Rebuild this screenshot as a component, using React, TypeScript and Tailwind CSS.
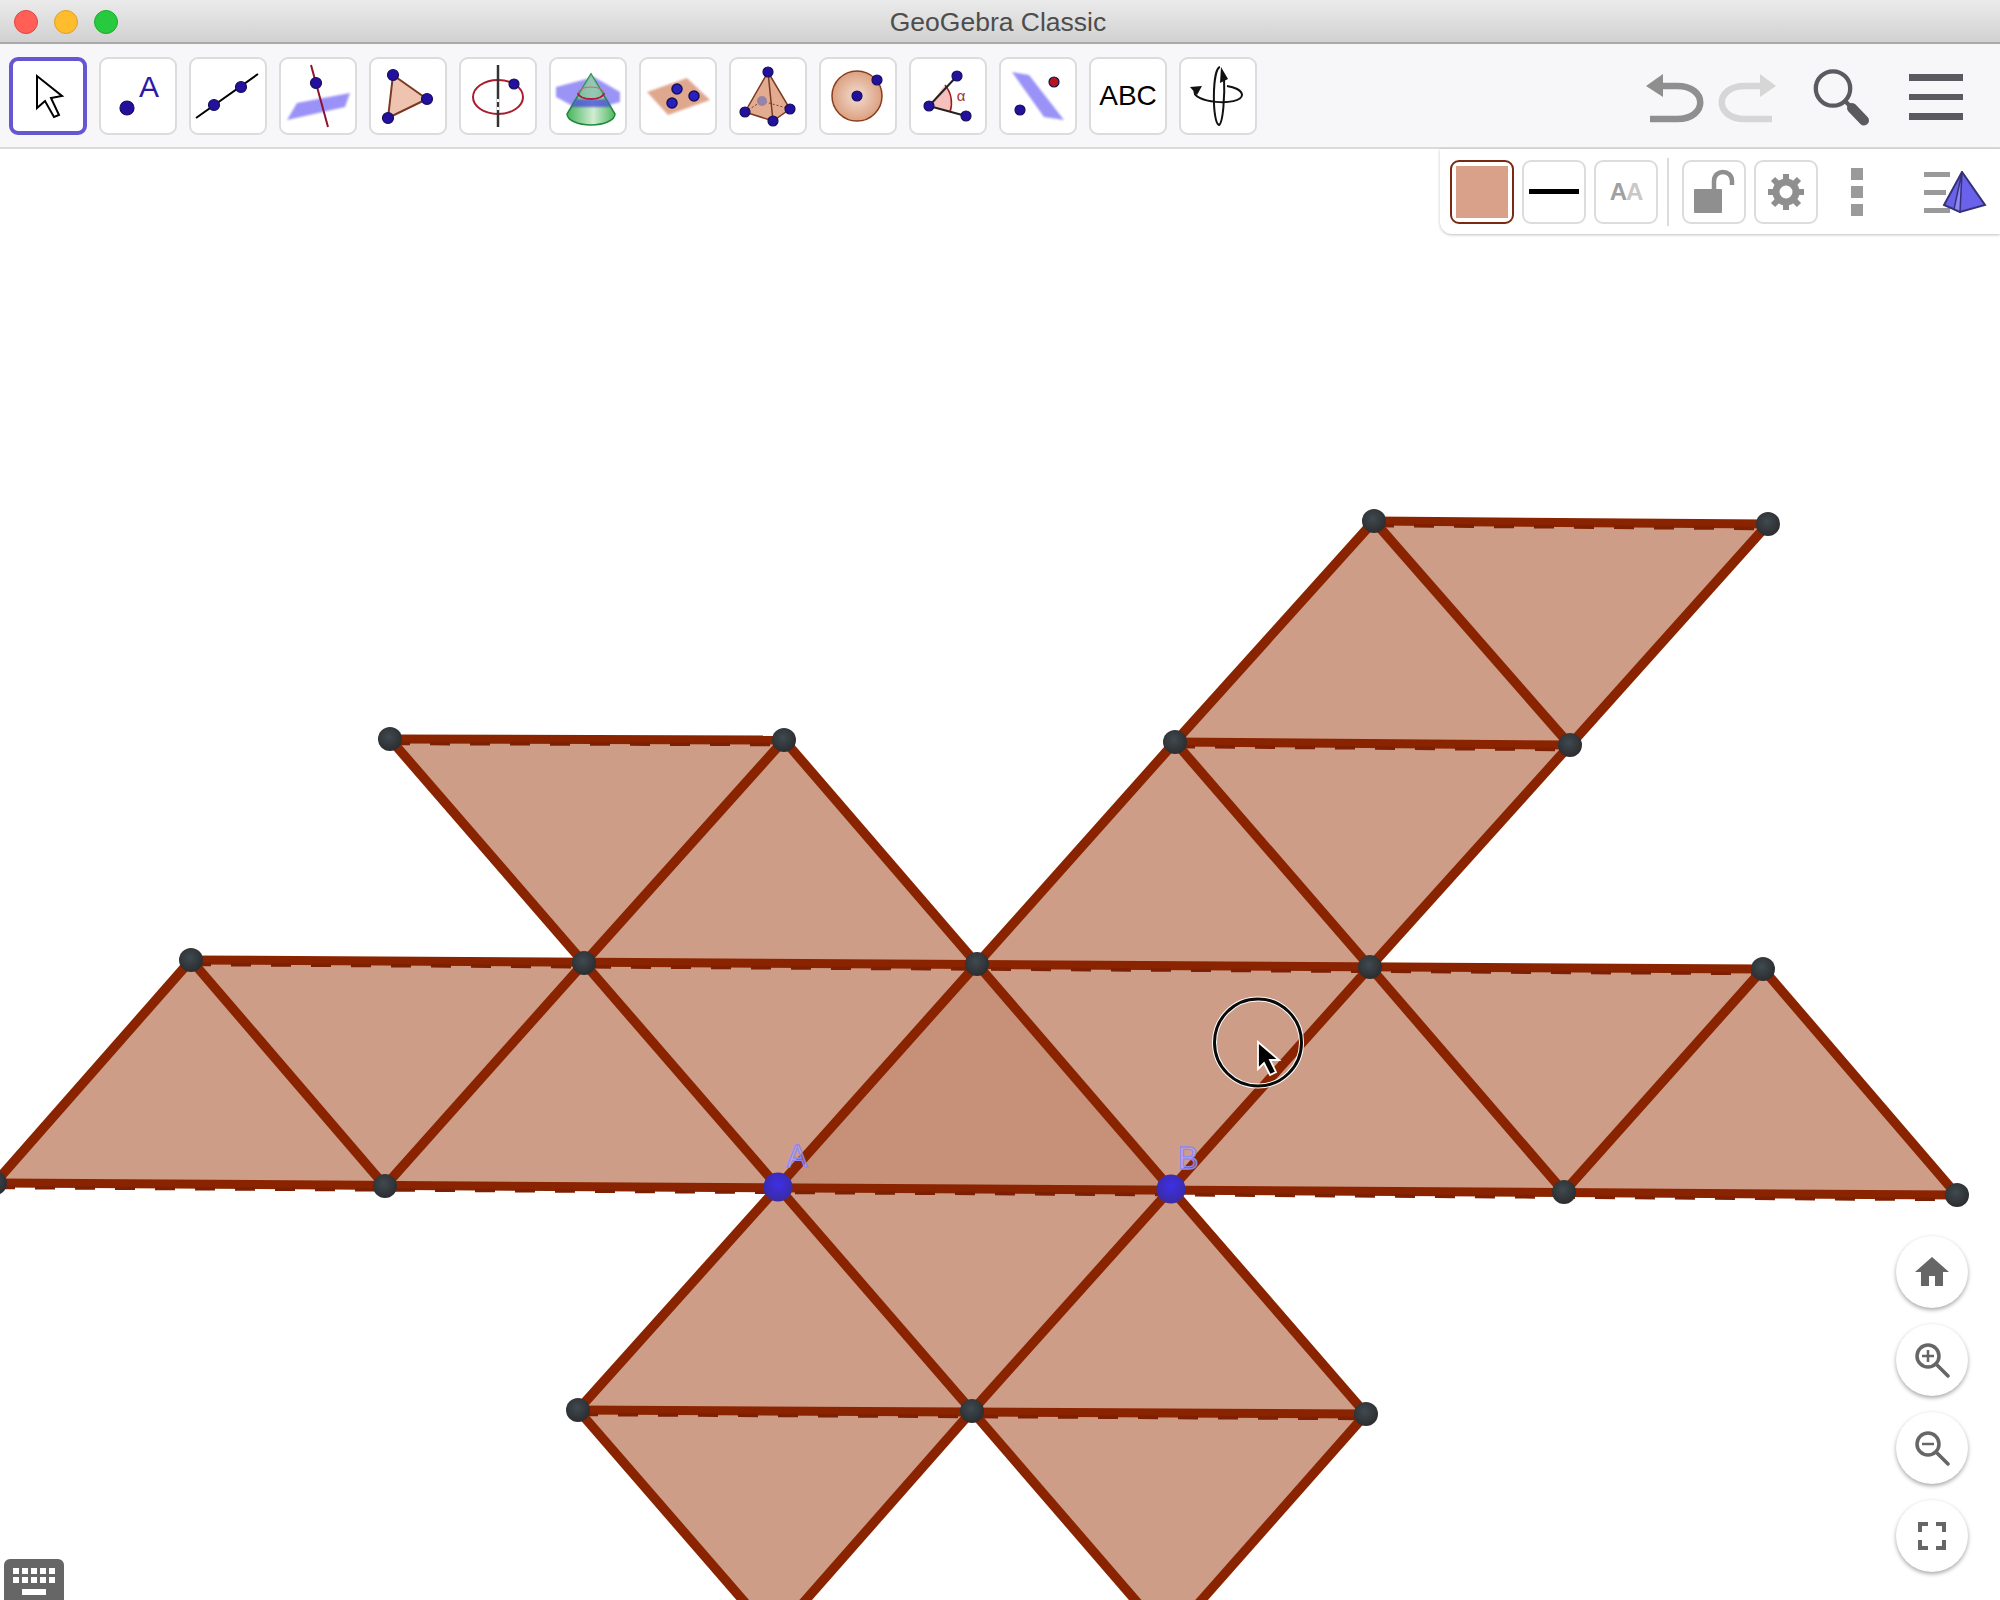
import React from "react";

type P = [number, number];
const V: Record<string, P> = {
  a: [1374, 521], b: [1768, 524], c: [1175, 742], d: [1570, 745],
  e: [390, 739], f: [784, 740],
  g: [191, 960], h: [584, 963], i: [977, 964], j: [1370, 967], k: [1763, 969],
  l: [-5, 1183], m: [385, 1186], n: [778, 1187], o: [1171, 1189], p: [1564, 1192], q: [1957, 1195],
  r: [578, 1410], s: [972, 1411], t: [1366, 1414],
  u: [774, 1636], v: [1168, 1638],
};
const TRIS = ["abd", "acd", "cdj", "cij", "efh", "fhi", "ghm", "glm", "hmn", "hin", "ino", "ijo", "jop", "jkp", "kpq", "nos", "nrs", "ost", "rsu", "stv"];
const HORIZ = ["ab", "cd", "ef", "gk", "lq", "rt"];
const DIAG = ["ad", "ac", "bd", "dj", "cj", "ci", "eh", "fh", "fi", "gm", "gl", "hm", "hn", "in", "io", "jo", "jp", "kp", "kq", "ns", "nr", "os", "ot", "ru", "su", "sv", "tv"];
const DARK = ["a", "b", "c", "d", "e", "f", "g", "h", "i", "j", "k", "l", "m", "p", "q", "r", "s", "t"];

const pts = (s: string) => s.split("").map((c) => V[c].join(",")).join(" ");

function Canvas() {
  return (
    <svg className="absolute inset-0" width="2000" height="1451" viewBox="0 149 2000 1451">
      <defs>
        <radialGradient id="gDark" cx="45%" cy="40%" r="65%">
          <stop offset="0%" stopColor="#3f4a50" />
          <stop offset="100%" stopColor="#2a2a2c" />
        </radialGradient>
        <radialGradient id="gBlue" cx="50%" cy="40%" r="65%">
          <stop offset="0%" stopColor="#3d30e6" />
          <stop offset="100%" stopColor="#3a2a9c" />
        </radialGradient>
      </defs>
      {TRIS.map((t) => (
        <polygon key={t} points={pts(t)} fill={t === "ino" ? "#c79079" : "#ce9d88"} />
      ))}
      {DIAG.map((e) => (
        <line key={e} x1={V[e[0]][0]} y1={V[e[0]][1]} x2={V[e[1]][0]} y2={V[e[1]][1]} stroke="#8a2400" strokeWidth="9.5" />
      ))}
      {HORIZ.map((e) => (
        <g key={e}>
          <line x1={V[e[0]][0]} y1={V[e[0]][1]} x2={V[e[1]][0]} y2={V[e[1]][1]} stroke="#8a2400" strokeWidth="9" />
          <line x1={V[e[0]][0]} y1={V[e[0]][1] + 4.5} x2={V[e[1]][0]} y2={V[e[1]][1] + 4.5} stroke="#7c1f02" strokeWidth="3.5" strokeDasharray="20 20" />
        </g>
      ))}
      {DARK.map((k) => (
        <circle key={k} cx={V[k][0]} cy={V[k][1]} r="12" fill="url(#gDark)" />
      ))}
      <circle cx={V.n[0]} cy={V.n[1]} r="14.5" fill="url(#gBlue)" />
      <circle cx={V.o[0]} cy={V.o[1]} r="14.5" fill="url(#gBlue)" />
      <text x="797" y="1167" textAnchor="middle" fontFamily="Liberation Sans, sans-serif" fontSize="31" fill="#c9b8f0" fillOpacity="0.35" stroke="#8c88f8" strokeWidth="1.3">A</text>
      <text x="1188" y="1169" textAnchor="middle" fontFamily="Liberation Sans, sans-serif" fontSize="31" fill="#c9b8f0" fillOpacity="0.35" stroke="#8c88f8" strokeWidth="1.3">B</text>
      <circle cx="1258" cy="1042.5" r="43.5" fill="none" stroke="#fff" strokeWidth="5" />
      <circle cx="1258" cy="1042.5" r="43.5" fill="none" stroke="#0a0a0a" strokeWidth="3" />
      <polygon points="1258,1042 1258,1069 1264,1063 1270,1075 1276,1072 1270,1060 1279,1060" fill="#000" stroke="#fff" strokeWidth="1.8" />
    </svg>
  );
}

const BP = "#23109f";
const Pt = ({ x, y, c = BP, r = 6.5 }: { x: number; y: number; c?: string; r?: number }) => (
  <circle cx={x} cy={y} r={r} fill={c} stroke="#14105a" strokeWidth="1.2" />
);

const Ico = ({ children }: { children: React.ReactNode }) => (
  <svg width="78" height="78" viewBox="0 0 78 78" className="block shrink-0">
    {children}
  </svg>
);

const ICONS: React.ReactNode[] = [
  <Ico key="0">
    <polygon points="28,19 28,51 36,44 45,60 50,58 42,41 53,39" fill="#fff" stroke="#000" strokeWidth="2" />
  </Ico>,
  <Ico key="1">
    <Pt x={28} y={51} r={7} />
    <text x="50" y="40" textAnchor="middle" fontFamily="Liberation Sans, sans-serif" fontSize="30" fill="#2a1aa8">A</text>
  </Ico>,
  <Ico key="2">
    <line x1="7" y1="61" x2="69" y2="17" stroke="#000" strokeWidth="2" />
    <Pt x={25} y={48} r={5.5} />
    <Pt x={52} y={30} r={5.5} />
  </Ico>,
  <Ico key="3">
    <polygon points="8,63 18,46 71,36 66,50" fill="#9a92f6" style={{ filter: "blur(1px)" }} />
    <line x1="32" y1="8" x2="49" y2="70" stroke="#8c1230" strokeWidth="2" />
    <Pt x={37} y={26} r={5.5} />
  </Ico>,
  <Ico key="4">
    <polygon points="24,18 58,42 19,61" fill="#eec4b0" stroke="#7a3a20" strokeWidth="2" />
    <Pt x={24} y={18} r={5.5} />
    <Pt x={58} y={42} r={5.5} />
    <Pt x={19} y={61} r={5.5} />
  </Ico>,
  <Ico key="5">
    <ellipse cx="39" cy="40" rx="25" ry="17" fill="none" stroke="#a81c2c" strokeWidth="2" />
    <line x1="39" y1="8" x2="39" y2="70" stroke="#333" strokeWidth="2.5" />
    <line x1="39" y1="42" x2="39" y2="56" stroke="#fff" strokeWidth="2.5" strokeDasharray="3 5" />
    <Pt x={55} y={27} r={5} />
  </Ico>,
  <Ico key="6">
    <defs>
      <linearGradient id="cone" x1="0" x2="1" y1="0" y2="0">
        <stop offset="0%" stopColor="#47b45c" />
        <stop offset="55%" stopColor="#d2ecd2" />
        <stop offset="100%" stopColor="#4db862" />
      </linearGradient>
    </defs>
    <polygon points="7,30 45,20 71,35 71,45 35,55 7,40" fill="#8a82f4" opacity="0.85" style={{ filter: "blur(0.8px)" }} />
    <path d="M42 17 L18 57 A24 11 0 0 0 66 57 Z" fill="url(#cone)" stroke="#1f8a3a" strokeWidth="1.5" />
    <path d="M42 17 L30 37 A13 6 0 0 0 54 37 Z" fill="#7fb8a8" opacity="0.7" />
    <polygon points="27,42 57,42 62,50 22,50" fill="#4a50d8" opacity="0.8" style={{ filter: "blur(0.8px)" }} />
    <ellipse cx="42" cy="36" rx="13" ry="6" fill="none" stroke="#c46a70" strokeWidth="1" />
    <path d="M29 36 A13 6 0 0 0 55 36" fill="none" stroke="#b01c3c" strokeWidth="1.8" />
  </Ico>,
  <Ico key="7">
    <polygon points="8,35 48,21 71,43 29,58" fill="#dfa88e" style={{ filter: "blur(1px)" }} />
    <circle cx="38" cy="32" r="5" fill="#2a20c0" stroke="#14105a" strokeWidth="1.5" />
    <circle cx="55" cy="39" r="5" fill="#2a20c0" stroke="#14105a" strokeWidth="1.5" />
    <circle cx="33" cy="46" r="5" fill="#2a20c0" stroke="#14105a" strokeWidth="1.5" />
  </Ico>,
  <Ico key="8">
    <polygon points="39,15 16,55 44,64 61,52" fill="#e3ac90" stroke="#7a3a20" strokeWidth="1.5" />
    <line x1="39" y1="15" x2="44" y2="64" stroke="#7a3a20" strokeWidth="1.5" />
    <line x1="16" y1="55" x2="33" y2="44" stroke="#7a3a20" strokeWidth="1" strokeDasharray="2 2" />
    <line x1="61" y1="52" x2="33" y2="44" stroke="#7a3a20" strokeWidth="1" strokeDasharray="2 2" />
    <Pt x={39} y={15} r={5} />
    <Pt x={16} y={55} r={5} />
    <Pt x={61} y={52} r={5} />
    <Pt x={44} y={64} r={5} />
    <circle cx="33" cy="44" r="5" fill="#9684a8" />
  </Ico>,
  <Ico key="9">
    <defs>
      <radialGradient id="ball" cx="50%" cy="50%" r="55%">
        <stop offset="0%" stopColor="#f3ddd2" />
        <stop offset="100%" stopColor="#d99b78" />
      </radialGradient>
    </defs>
    <circle cx="38" cy="39" r="25" fill="url(#ball)" stroke="#8a3c1c" strokeWidth="1.5" />
    <Pt x={38} y={39} r={5} />
    <Pt x={58} y={23} r={5} />
  </Ico>,
  <Ico key="10">
    <path d="M20 49 L36 28 A28 28 0 0 1 41 55 Z" fill="#f6c0bc" />
    <path d="M36 28 A28 28 0 0 1 41 55" fill="none" stroke="#9a1c1c" strokeWidth="1.5" />
    <line x1="20" y1="49" x2="48" y2="19" stroke="#222" strokeWidth="2" />
    <line x1="20" y1="49" x2="57" y2="59" stroke="#222" strokeWidth="2" />
    <Pt x={48} y={19} r={5} />
    <Pt x={20} y={49} r={5} />
    <Pt x={57} y={59} r={5} />
    <text x="52" y="44" textAnchor="middle" fontFamily="Liberation Sans, sans-serif" fontSize="15" fill="#a8302c">α</text>
  </Ico>,
  <Ico key="11">
    <polygon points="13,15 30,18 65,63 45,60" fill="#9a92f6" style={{ filter: "blur(1px)" }} />
    <Pt x={55} y={25} r={5} c="#b8141c" />
    <Pt x={21} y={53} r={5} />
  </Ico>,
  <span key="12" className="text-[28px] leading-none text-black [font-family:'Liberation_Sans',sans-serif]">ABC</span>,
  <Ico key="13">
    <path d="M41 10 C33 12 33 66 40 68 C44 66 46 40 45 18" fill="none" stroke="#111" strokeWidth="2" />
    <path d="M16 33 C10 46 62 50 63 38 C63 33 55 30 48 29" fill="none" stroke="#111" strokeWidth="2" />
    <polygon points="42,10 49,22 41,26" fill="#111" />
    <polygon points="11,30 23,29 18,38" fill="#111" />
  </Ico>,
];

function ToolButton({ active, children }: { active?: boolean; children: React.ReactNode }) {
  return (
    <button
      className={
        active
          ? "flex h-[78px] w-[78px] items-center justify-center rounded-[9px] border-4 border-[#6557d2] bg-white"
          : "flex h-[78px] w-[78px] items-center justify-center rounded-[9px] border-2 border-[#dcdcdc] bg-white"
      }
    >
      {children}
    </button>
  );
}

function StyleButton({ active, children }: { active?: boolean; children: React.ReactNode }) {
  return (
    <button
      className={
        active
          ? "flex h-[64px] w-[64px] items-center justify-center rounded-[9px] border-2 border-[#7a2a12] bg-white"
          : "flex h-[64px] w-[64px] items-center justify-center rounded-[9px] border-2 border-[#dcdcdc] bg-white"
      }
    >
      {children}
    </button>
  );
}

function ZoomButton({ children }: { children: React.ReactNode }) {
  return (
    <button className="flex h-[72px] w-[72px] items-center justify-center rounded-full bg-white shadow-[0_2px_4px_rgba(0,0,0,0.35)]">
      {children}
    </button>
  );
}

export default function App() {
  return (
    <div className="flex h-[1600px] w-[2000px] flex-col overflow-hidden bg-white [font-family:'Liberation_Sans',sans-serif]">
      <div className="relative flex h-[44px] shrink-0 items-center justify-center border-b-2 border-[#a9a9a9] bg-gradient-to-b from-[#ebebeb] to-[#d1d1d1]">
        <div className="absolute left-[14px] top-[10px] flex gap-[16px]">
          <span className="h-[24px] w-[24px] rounded-full border border-[#e0443e] bg-[#ff5f57]" />
          <span className="h-[24px] w-[24px] rounded-full border border-[#dea123] bg-[#ffbd2e]" />
          <span className="h-[24px] w-[24px] rounded-full border border-[#1aab29] bg-[#27c93f]" />
        </div>
        <span className="mr-[4px] mt-[2px] text-[26.5px] leading-none text-[#4d4d4d]">GeoGebra Classic</span>
      </div>

      <div className="flex h-[105px] shrink-0 items-center justify-between border-b-2 border-[#dadada] bg-[#f7f7f9] pl-[9px] pr-[37px]">
        <div className="flex gap-[12px]">
          {ICONS.map((ic, i) => (
            <ToolButton key={i} active={i === 0}>
              {ic}
            </ToolButton>
          ))}
        </div>
        <div className="mt-[5px] flex items-center">
          <svg width="60" height="56" viewBox="1644 70 60 56">
            <path d="M1650 119 H1677 C1708 119 1708 86 1677 86 H1660" fill="none" stroke="#8f8f8f" strokeWidth="6.5" />
            <polygon points="1646,86 1663,74 1663,97" fill="#8f8f8f" />
          </svg>
          <svg width="60" height="56" viewBox="1718 70 60 56" className="ml-[14px]">
            <path d="M1772 119 H1745 C1714 119 1714 86 1745 86 H1762" fill="none" stroke="#d6d6d6" strokeWidth="6.5" />
            <polygon points="1776,86 1760,74 1760,97" fill="#d6d6d6" />
          </svg>
          <svg width="60" height="58" viewBox="1812 70 60 58" className="ml-[34px]">
            <circle cx="1833" cy="89.5" r="17.2" fill="none" stroke="#5b5a60" strokeWidth="4.3" />
            <line x1="1845" y1="102" x2="1852" y2="109" stroke="#5b5a60" strokeWidth="4.3" />
            <line x1="1852" y1="109" x2="1864" y2="121.5" stroke="#5b5a60" strokeWidth="10" strokeLinecap="round" />
          </svg>
          <div className="mb-[2px] ml-[37px] flex w-[54px] flex-col gap-[13px]">
            <div className="h-[6.5px] bg-[#5b5a60]" />
            <div className="h-[6.5px] bg-[#5b5a60]" />
            <div className="h-[6.5px] bg-[#5b5a60]" />
          </div>
        </div>
      </div>

      <div className="relative flex-1">
        <Canvas />

        <div className="absolute right-0 top-0 flex h-[85px] w-[560px] items-center rounded-bl-[12px] bg-white pl-[10px] shadow-[0_1px_3px_rgba(0,0,0,0.25)]">
          <div className="flex gap-[8px]">
            <StyleButton active>
              <span className="h-[52px] w-[52px] bg-[#d9a08a]" />
            </StyleButton>
            <StyleButton>
              <span className="h-[5px] w-[50px] bg-black" />
            </StyleButton>
            <StyleButton>
              <span className="text-[24px] font-bold leading-none tracking-[-1px] text-[#a0a0a0]">
                A<span className="text-[#c8c8c8]">A</span>
              </span>
            </StyleButton>
          </div>
          <div className="ml-[9px] mr-[13px] h-[68px] w-[2px] bg-[#dcdcdc]" />
          <div className="flex gap-[8px]">
            <StyleButton>
              <svg width="44" height="46" viewBox="0 0 44 46">
                <rect x="2" y="20" width="28" height="24" rx="1" fill="#8f8f8f" />
                <path d="M22 20 V12 C22 0 40 0 40 12 V16" fill="none" stroke="#8f8f8f" strokeWidth="4.5" />
              </svg>
            </StyleButton>
            <StyleButton>
              <svg width="36" height="36" viewBox="0 0 36 36">
                <circle cx="18" cy="18" r="10" fill="none" stroke="#8f8f8f" strokeWidth="7" />
                <g stroke="#8f8f8f" strokeWidth="6">
                  <line x1="18" y1="0" x2="18" y2="7" />
                  <line x1="18" y1="29" x2="18" y2="36" />
                  <line x1="0" y1="18" x2="7" y2="18" />
                  <line x1="29" y1="18" x2="36" y2="18" />
                  <line x1="5" y1="5" x2="10" y2="10" />
                  <line x1="26" y1="26" x2="31" y2="31" />
                  <line x1="31" y1="5" x2="26" y2="10" />
                  <line x1="5" y1="31" x2="10" y2="26" />
                </g>
              </svg>
            </StyleButton>
          </div>
          <div className="ml-[33px] flex flex-col gap-[6px]">
            <span className="h-[12px] w-[12px] bg-[#9a9a9a]" />
            <span className="h-[12px] w-[12px] bg-[#9a9a9a]" />
            <span className="h-[12px] w-[12px] bg-[#9a9a9a]" />
          </div>
          <svg width="64" height="44" viewBox="0 0 64 44" className="ml-[61px] mt-[2px]">
            <g fill="#9a9a9a">
              <rect x="0" y="1" width="26" height="5" />
              <rect x="0" y="19" width="22" height="5" />
              <rect x="0" y="37" width="26" height="5" />
            </g>
            <polygon points="38,1 20,34 36,41 61,34" fill="#6a62ea" stroke="#35327a" strokeWidth="2" />
            <polygon points="38,1 30,38 36,41" fill="#8f88f4" stroke="#35327a" strokeWidth="1.5" />
          </svg>
        </div>

        <div className="absolute bottom-[28px] right-[32px] flex flex-col gap-[16px]">
          <ZoomButton>
            <svg width="34" height="30" viewBox="0 0 34 30">
              <path d="M17 0 L34 15 H28 V29 H20 V19 H14 V29 H6 V15 H0 Z" fill="#666" />
            </svg>
          </ZoomButton>
          <ZoomButton>
            <svg width="36" height="36" viewBox="0 0 36 36">
              <circle cx="14" cy="14" r="11" fill="none" stroke="#666" strokeWidth="3.5" />
              <line x1="22" y1="22" x2="34" y2="34" stroke="#666" strokeWidth="3.5" strokeLinecap="round" />
              <path d="M14 8 V20 M8 14 H20" stroke="#666" strokeWidth="2.5" />
            </svg>
          </ZoomButton>
          <ZoomButton>
            <svg width="36" height="36" viewBox="0 0 36 36">
              <circle cx="14" cy="14" r="11" fill="none" stroke="#666" strokeWidth="3.5" />
              <line x1="22" y1="22" x2="34" y2="34" stroke="#666" strokeWidth="3.5" strokeLinecap="round" />
              <path d="M8 14 H20" stroke="#666" strokeWidth="2.5" />
            </svg>
          </ZoomButton>
          <ZoomButton>
            <svg width="28" height="28" viewBox="0 0 28 28">
              <path d="M2 10 V2 H10 M18 2 H26 V10 M26 18 V26 H18 M10 26 H2 V18" fill="none" stroke="#666" strokeWidth="4" />
            </svg>
          </ZoomButton>
        </div>

        <div className="absolute bottom-0 left-[4px] flex h-[41px] w-[60px] flex-col items-center gap-[2px] rounded-t-[6px] bg-[#666] pt-[9px]">
          <div className="grid grid-cols-5 gap-x-[3px] gap-y-[3px]">
            {Array.from({ length: 10 }).map((_, i) => (
              <span key={i} className="h-[6px] w-[6px] bg-white" />
            ))}
          </div>
          <span className="mt-[4px] h-[6px] w-[24px] bg-white" />
        </div>
      </div>
    </div>
  );
}
